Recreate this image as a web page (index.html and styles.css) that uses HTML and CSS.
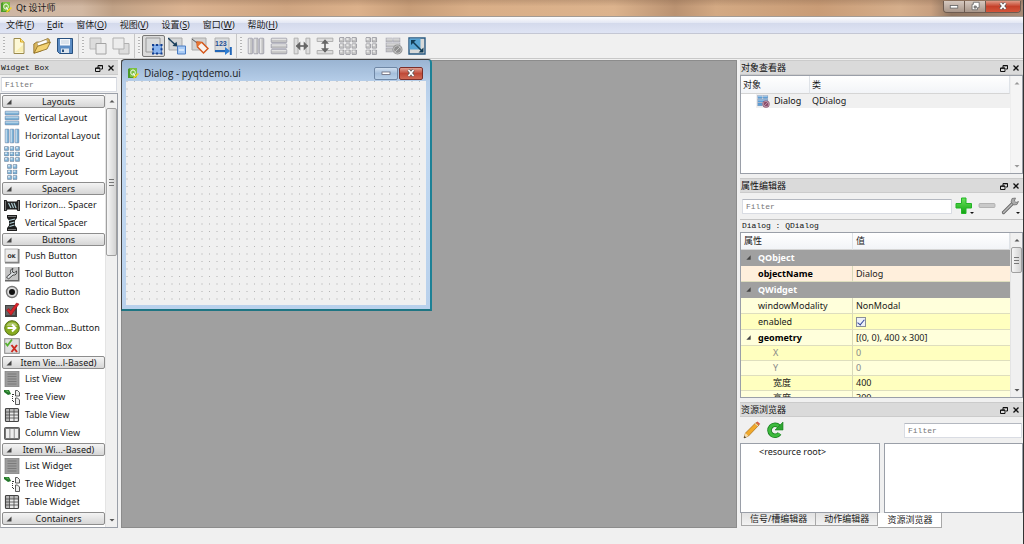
FILE: index.html
```html
<!DOCTYPE html>
<html lang="zh-CN">
<head>
<meta charset="utf-8">
<title>Qt 设计师</title>
<link rel="stylesheet" href="styles.css">
</head>
<body>
<svg class="defs" aria-hidden="true">
  <defs>
    <linearGradient id="g-grey" x1="0" y1="0" x2="1" y2="1"><stop offset="0" stop-color="#f4f4f4"/><stop offset="1" stop-color="#a4a4a4"/></linearGradient>
    <linearGradient id="g-green" x1="0" y1="0" x2="0" y2="1"><stop offset="0" stop-color="#6be35c"/><stop offset="1" stop-color="#12a312"/></linearGradient>
    <symbol id="i-qt" viewBox="0 0 12 12"><path d="M1 2l2-1h7v8l-1 2H1z" fill="#4c9a2a"/><path d="M3 1h7v8L9 10H3z" fill="#7cc142"/><path d="M6 3c-3 0-3 5 0 5s3-5 0-5M6 6l2 3" fill="none" stroke="#fff"/><path d="M11 6l1 1-4 4-2 .5.6-1.6z" fill="#f3d321"/></symbol>
    <symbol id="i-float" viewBox="0 0 8 8"><path d="M3 4V1.500h4.500V5H6M3 1.800h4.500M.5 4H5v3.500H.5zM.5 4.300H5" fill="none" stroke="#111"/></symbol>
    <symbol id="i-close" viewBox="0 0 8 8"><path d="M1.500 1.500l5 5M6.500 1.500l-5 5" stroke="#111" stroke-width="1.300"/></symbol>
    <symbol id="i-tri" viewBox="0 0 8 8"><path d="M6.500 1.500v5h-5z" fill="#444"/></symbol>
    <symbol id="i-up" viewBox="0 0 8 8"><path d="M1.500 5.500L4 3l2.500 2.500z" fill="#555"/></symbol>
    <symbol id="i-down" viewBox="0 0 8 8"><path d="M1.500 3L4 5.500 6.500 3z" fill="#555"/></symbol>

    <symbol id="i-rows" viewBox="0 0 16 16"><g fill="currentColor" stroke="#557" stroke-opacity=".5" stroke-width=".6"><rect x="1" y="1" width="14" height="4" rx=".8"/><rect x="1" y="6" width="14" height="4" rx=".8"/><rect x="1" y="11" width="14" height="4" rx=".8"/></g><path d="M1.500 1.500h13v1.200h-13zM1.500 6.500h13v1.200h-13zM1.500 11.500h13v1.200h-13z" fill="#fff" opacity=".5"/></symbol>
    <symbol id="i-cols" viewBox="0 0 16 16"><g fill="currentColor" stroke="#557" stroke-opacity=".5" stroke-width=".6"><rect x="1" y="1" width="4" height="14" rx=".8"/><rect x="6" y="1" width="4" height="14" rx=".8"/><rect x="11" y="1" width="4" height="14" rx=".8"/></g><path d="M1.500 1.500h1.300v13H1.500zM6.500 1.500h1.300v13H6.500zM11.500 1.500h1.300v13h-1.300z" fill="#fff" opacity=".6"/></symbol>
    <symbol id="i-cell" viewBox="0 0 5 5"><rect x=".4" y=".4" width="4.200" height="4.200" rx=".7" fill="currentColor" stroke="#445" stroke-opacity=".55" stroke-width=".6"/><rect x="1" y="1" width="2" height="1.600" fill="#fff" opacity=".65"/></symbol>
    <symbol id="i-grid" viewBox="0 0 16 16"><use href="#i-cell" x="0" y="0" width="5" height="5"/><use href="#i-cell" x="5.500" y="0" width="5" height="5"/><use href="#i-cell" x="11" y="0" width="5" height="5"/><use href="#i-cell" x="0" y="5.500" width="5" height="5"/><use href="#i-cell" x="5.500" y="5.500" width="5" height="5"/><use href="#i-cell" x="11" y="5.500" width="5" height="5"/><use href="#i-cell" x="0" y="11" width="5" height="5"/><use href="#i-cell" x="5.500" y="11" width="5" height="5"/><use href="#i-cell" x="11" y="11" width="5" height="5"/></symbol>
    <symbol id="i-form" viewBox="0 0 16 16"><use href="#i-cell" x="3" y="0" width="5" height="5"/><use href="#i-cell" x="8.500" y="0" width="5" height="5"/><use href="#i-cell" x="3" y="5.500" width="5" height="5"/><use href="#i-cell" x="8.500" y="5.500" width="5" height="5"/><use href="#i-cell" x="3" y="11" width="5" height="5"/><use href="#i-cell" x="8.500" y="11" width="5" height="5"/></symbol>
    <symbol id="i-break" viewBox="0 0 18 18"><g fill="currentColor" stroke="#557" stroke-opacity=".4" stroke-width=".6"><rect x="1" y="1" width="6.500" height="4"/><rect x="8.500" y="1" width="6.500" height="4"/><rect x="1" y="6" width="14" height="4"/><rect x="1" y="11" width="6.500" height="4"/></g><path d="M1.500 1.500h13v1h-13zM1.500 6.500h13v1h-13z" fill="#fff" opacity=".5"/><circle cx="12.500" cy="12.500" r="5" class="ban"/><path d="M9.700 15.300l5.600-5.600M12.500 8.700a3.800 3.800 0 1 1-.1 0" fill="none" stroke="#ddd" stroke-opacity=".7"/></symbol>
    <symbol id="i-hspacer" viewBox="0 0 16 16"><path d="M0 3h2.500l1 1.500h9l1-1.500H16v11h-2.500l-1-1.500h-9l-1 1.500H0z" fill="#222"/><path d="M1.500 4v9M14.500 4v9" stroke="#777"/><path d="M4.500 6l2.500 5M7.500 6l2 5M10 6l2 5" stroke="#a9c7ce" stroke-width="1.200"/></symbol>
    <symbol id="i-vspacer" viewBox="0 0 16 16"><path d="M3 0h10v3L11 5.500v5l2 2.500v3H3v-3l2-2.500v-5L3 3z" fill="#1d1d1d"/><path d="M4 1.500h8M4 14.500h8" stroke="#777"/><path d="M5 5.500l6-1.500M5.500 8.500l5-1.500M5.500 11.500l5-1.500" stroke="#b5d3da" stroke-width="1.200"/></symbol>
    <symbol id="i-ok" viewBox="0 0 16 16"><rect x="1" y="1" width="14.500" height="14.500" fill="#777"/><rect x="1" y="1" width="13" height="13" fill="#ececec" stroke="#999" stroke-width=".7"/><text x="7.500" y="9.500" text-anchor="middle" class="ok-text">OK</text></symbol>
    <symbol id="i-tool" viewBox="0 0 16 16"><rect x="1" y="1" width="14.500" height="14.500" fill="#666"/><rect x="1" y="1" width="13" height="13" fill="#c4c4c4"/><path d="M9 2.500c-3 .5-3 3.500-1.800 4.600L2.500 11l2 2 4.500-4c2.500.6 4.300-1.500 3.500-4l-2 1.800-1.700-.5-.6-1.600z" fill="#dfe3e6" stroke="#333" stroke-width=".9"/></symbol>
    <symbol id="i-radio" viewBox="0 0 16 16"><circle cx="8" cy="8" r="5.500" fill="#ddd" stroke="#777" stroke-width="1.400"/><circle cx="8" cy="8" r="3" fill="#111"/></symbol>
    <symbol id="i-check" viewBox="0 0 16 16"><path d="M1 3h12v12H1z" fill="#444"/><path d="M2 4h9v9H2z" fill="#666"/><path d="M2.500 8l2.500-1.500 1.500 2.500L12.500 1l2.500 1-8 11.500z" fill="#d8232a" stroke="#8c1115" stroke-width=".5"/></symbol>
    <symbol id="i-cmd" viewBox="0 0 16 16"><circle cx="8" cy="8" r="7.300" fill="#87ab20" stroke="#55701a"/><path d="M2.500 6a5.800 5 0 0 1 11 0z" fill="#fff" opacity=".35"/><path d="M3.500 8h8M8 4.500L11.500 8 8 11.500" fill="none" stroke="#fff" stroke-width="2"/></symbol>
    <symbol id="i-bbox" viewBox="0 0 16 16"><rect x=".7" y=".7" width="14.600" height="14.600" fill="#dfdfdf" stroke="#888"/><path d="M1.500 5l2 2.500L8 1.500" fill="none" stroke="#57b030" stroke-width="1.800"/><path d="M7.500 7l5.500 7M13 7l-5.500 7" stroke="#cc2a20" stroke-width="2"/></symbol>
    <symbol id="i-list" viewBox="0 0 16 16"><rect x="1" y="0" width="14" height="16" fill="#9c9c9c" stroke="#808080" stroke-width=".7"/><path d="M3.500 3h9M3.500 5.500h9M3.500 8h9M3.500 10.500h9M3.500 13h9" stroke="#777" stroke-width=".9"/></symbol>
    <symbol id="i-tree" viewBox="0 0 16 16"><path d="M0 1l5 0 2 4-3 1-4-3z" fill="#23762a"/><path d="M1 1.500l3 .3 1 2z" fill="#67c05d"/><path d="M8.500 5v7.500H11M9 5.500h2" fill="none" stroke="#333" stroke-dasharray="1 1"/><path d="M11.500 1.500h2L15.500 3.500V7h-4zM11.500 9h2l2 2v4.500h-4z" fill="#eee" stroke="#333" stroke-width=".8"/></symbol>
    <symbol id="i-table" viewBox="0 0 16 16"><rect x="1.500" y="1.500" width="13" height="13" rx="1" fill="#e9e9e9" stroke="#444" stroke-width="1.200"/><path d="M2 2h12v3H2zM2 2h3v12H2z" fill="#999" opacity=".6"/><path d="M2 5h12M2 8h12M2 11h12M5.500 2v12M10 2v12" stroke="#444" stroke-width=".8"/></symbol>
    <symbol id="i-column" viewBox="0 0 16 16"><rect x=".5" y="2.500" width="15" height="12" rx="1" fill="#777" stroke="#444" stroke-width=".8"/><path d="M2 4h3.500v9H2zM6.300 4h3.500v9H6.300zM10.600 4h3.500v9h-3.500z" fill="#eee"/></symbol>
    <symbol id="i-container" viewBox="0 0 16 16"><path d="M3 1h10v14H3z" fill="#333"/></symbol>

    <symbol id="i-new" viewBox="0 0 18 18"><path d="M4 1.500h6.500L14 5v11.500H4z" fill="#fdf8d6" stroke="#9b8a4c"/><path d="M10.500 1.500V5H14" fill="#f7e38b" stroke="#d9a820"/><path d="M5 15h8V8z" fill="#f7e9a0" opacity=".7"/></symbol>
    <symbol id="i-open" viewBox="0 0 18 18"><path d="M.8 16V7l3-2h3l8-3.500 1.500 1V7L8 14z" fill="#d9b65c" stroke="#8a6a20" stroke-width=".8"/><path d="M4 6l9.500-3.500 1 3L5 9z" fill="#fff" stroke="#9b8a5c" stroke-width=".5"/><path d="M1 16.300l3.500-7L17.500 5 14 12z" fill="#f3d272" stroke="#8a6a20" stroke-width=".8"/></symbol>
    <symbol id="i-save" viewBox="0 0 18 18"><path d="M1.500 1.500h15v15h-13l-2-2z" fill="#5b8cc4" stroke="#28507f"/><path d="M4 2h10v6.500H4z" fill="#f4f7fb"/><path d="M5 4h8M5 6h8" stroke="#b9c6d5" stroke-width=".8"/><path d="M5 11.500h8V16H5z" fill="#dbe4ee"/><path d="M6 12.500h2V15H6z" fill="#28507f"/></symbol>
    <symbol id="i-back" viewBox="0 0 18 18"><path d="M1 1h11v11H1z" fill="#dcdcdc" stroke="#b8b8b8"/><path d="M7 6.500h10V17H7z" fill="#ececec" stroke="#a4a4a4"/></symbol>
    <symbol id="i-front" viewBox="0 0 18 18"><path d="M7 6.500h10V17H7z" fill="#dcdcdc" stroke="#b0b0b0"/><path d="M1 1h11v11H1z" fill="#ececec" stroke="#b0b0b0"/></symbol>
    <symbol id="i-edit" viewBox="0 0 18 18"><path d="M1 1h14v14H1z" fill="#d9dbdc" stroke="#999"/><path d="M8 8h8.500v8.500H8z" fill="#89b4ef" stroke="#2458ae" stroke-width=".6"/><path d="M7 7h2v2H7zM11 7h2v2h-2zM15.500 7h2v2h-2zM7 11.300h2v2H7zM15.500 11.300h2v2h-2zM7 15.500h2v2H7zM11 15.500h2v2h-2zM15.500 15.500h2v2h-2z" fill="#123f91"/></symbol>
    <symbol id="i-signal" viewBox="0 0 18 18"><path d="M1 1h13v12H1z" fill="#d4d6d7" stroke="#aaa"/><path d="M0 1l7 6.500" stroke="#1a3f5c" stroke-width="1.500"/><path d="M9.500 9.500l-5-.5 4-4.200z" fill="#1a3f5c"/><path d="M9.500 9h8v8h-8z" fill="#a9cbf5" stroke="#4a7cc3"/><path d="M11 13h5" stroke="#fff"/></symbol>
    <symbol id="i-buddy" viewBox="0 0 18 18"><path d="M1 1h14v12H1z" fill="#d2d3d3" stroke="#aaa"/><path d="M1 2l5 4" stroke="#555"/><path d="M6 5l5 .5 6 6-4.500 4.500-6-6z" fill="#f8f4f0" stroke="#d4571c" stroke-width="1.500"/><path d="M6 5l5 .5-4.500 4.500z" fill="#e77733"/></symbol>
    <symbol id="i-tab" viewBox="0 0 18 18"><path d="M1 1h14v14H1z" fill="#d9dbdc" stroke="#b2b2b2"/><text x="1" y="9" class="tab-text">123</text><path d="M1 14h12M16.800 10v8" stroke="#2367b8" stroke-width="2"/><path d="M11 10l5 4-5 4z" fill="#2f7dd1"/></symbol>
    <symbol id="i-hsplit" viewBox="0 0 16 16"><path d="M1 1h3.500v14H1zM11.500 1H15v14h-3.500z" fill="#ddd" stroke="#aaa" stroke-width=".8"/><path d="M3 8h10" stroke="#666" stroke-width="1.500"/><path d="M2.500 8l4-4v8zM13.500 8l-4-4v8z" fill="#666"/></symbol>
    <symbol id="i-vsplit" viewBox="0 0 16 16"><path d="M1 1h14v3H1zM1 12h14v3H1z" fill="#ddd" stroke="#aaa" stroke-width=".8"/><path d="M8 3v10" stroke="#666" stroke-width="1.500"/><path d="M8 2l3.500 4h-7zM8 14l3.500-4h-7z" fill="#666"/></symbol>
    <symbol id="i-adjust" viewBox="0 0 18 18"><path d="M1 1h16v16H1z" fill="#d8dad9" stroke="#285981" stroke-width="1.400"/><path d="M1.500 1.500h11v11h-11z" fill="#58a4d3"/><path d="M4 4l10 10" stroke="#123c55" stroke-width="1.500"/><path d="M3 3h5L3 8zM15.500 15.500h-5l5-5z" fill="#123c55"/></symbol>
    <symbol id="i-plus" viewBox="0 0 18 18"><path d="M6.500 1h4.500v5.500h5.500V11H11v5.500H6.500V11H1V6.500h5.500z" fill="url(#g-green)" stroke="#22b526"/></symbol>
    <symbol id="i-minus" viewBox="0 0 18 18"><rect x="1" y="6.500" width="16" height="4" rx="1" fill="#c9c9c9" stroke="#a8a8a8" stroke-width=".8"/></symbol>
    <symbol id="i-wrench" viewBox="0 0 18 18"><path d="M2.500 15.500L12 6" stroke="#666" stroke-width="3.200" stroke-linecap="round"/><path d="M2.500 15.500L12 6" stroke="#bbb" stroke-width="1.500" stroke-linecap="round"/><path d="M14.500 1l-3.500.5-1 3.500 2.500 3 3.500-.5 1.500-3-2.500 1-1.600-1.500z" fill="#aaa" stroke="#666" stroke-width=".7"/></symbol>
    <symbol id="i-pencil" viewBox="0 0 18 18"><path d="M1 17l1.500-5L13 1.500 16 4 5.500 15z" fill="#f1a92b" stroke="#a66a12" stroke-width=".7"/><path d="M13 1.500L14.500.6 17.300 3 16 4z" fill="#d75a48"/><path d="M12 2.500L15 5" stroke="#ddd"/><path d="M1 17l1.500-5 3 3z" fill="#f4dcae"/><path d="M1 17l.5-2 1.500 1.400z" fill="#222"/></symbol>
    <symbol id="i-reload" viewBox="0 0 18 18"><path d="M13 5.500A5.500 5.500 0 1 0 13.500 12.500" fill="none" stroke="#187d20" stroke-width="4.600"/><path d="M13 5.500A5.500 5.500 0 1 0 13.500 12.500" fill="none" stroke="#3dba3d" stroke-width="3"/><path d="M17 1v8H9z" fill="#2fa532" stroke="#187d20" stroke-width=".6"/></symbol>
  </defs>
</svg>

<header class="titlebar">
  <svg class="icon-12"><use href="#i-qt"/></svg>
  <h1 class="titlebar-text">Qt 设计师</h1>
  <div class="window-controls">
    <button class="wc" aria-label="最小化"><svg viewBox="0 0 12 12"><rect x="1.500" y="5.500" width="9" height="3" fill="#fff" stroke="#666"/></svg></button>
    <button class="wc" aria-label="还原"><svg viewBox="0 0 12 12"><path d="M4 1.500h7V8H9v2.500H2.500V4H4z" fill="#fff" stroke="#666"/><path d="M5 6h2.500v2.500H5z" fill="#999" stroke="#666"/></svg></button>
    <button class="wc wc-close" aria-label="关闭"><svg viewBox="0 0 12 12"><path d="M3 2.500l6 7M9 2.500l-6 7" stroke="#555" stroke-width="4"/><path d="M3 2.500l6 7M9 2.500l-6 7" stroke="#fff" stroke-width="2.200"/></svg></button>
  </div>
</header>

<nav class="menubar">
  <button>文件(<u>F</u>)</button><button><u>E</u>dit</button><button>窗体(<u>O</u>)</button><button>视图(<u>V</u>)</button><button>设置(<u>S</u>)</button><button>窗口(<u>W</u>)</button><button>帮助(<u>H</u>)</button>
</nav>

<div class="toolbar" role="toolbar">
  <div class="tool-group">
    <button aria-label="新建"><svg><use href="#i-new"/></svg></button>
    <button aria-label="打开"><svg><use href="#i-open"/></svg></button>
    <button aria-label="保存"><svg><use href="#i-save"/></svg></button>
  </div>
  <div class="tool-group">
    <button aria-label="置后"><svg><use href="#i-back"/></svg></button>
    <button aria-label="置前"><svg><use href="#i-front"/></svg></button>
  </div>
  <div class="tool-group">
    <button class="pressed" aria-label="编辑窗口部件"><svg><use href="#i-edit"/></svg></button>
    <button aria-label="编辑信号/槽"><svg><use href="#i-signal"/></svg></button>
    <button aria-label="编辑伙伴"><svg><use href="#i-buddy"/></svg></button>
    <button aria-label="编辑顺序"><svg><use href="#i-tab"/></svg></button>
  </div>
  <div class="tool-group grey">
    <button aria-label="水平布局"><svg><use href="#i-cols"/></svg></button>
    <button aria-label="垂直布局"><svg><use href="#i-rows"/></svg></button>
    <button aria-label="水平分裂器"><svg><use href="#i-hsplit"/></svg></button>
    <button aria-label="垂直分裂器"><svg><use href="#i-vsplit"/></svg></button>
    <button aria-label="栅格布局"><svg><use href="#i-grid"/></svg></button>
    <button aria-label="表单布局"><svg><use href="#i-form"/></svg></button>
    <button aria-label="打破布局"><svg><use href="#i-break"/></svg></button>
    <button aria-label="调整大小"><svg><use href="#i-adjust"/></svg></button>
  </div>
</div>

<main class="workspace">
  <aside class="dock dock-left">
    <div class="dock-title"><h2 class="mono">Widget Box</h2><button aria-label="浮动"><svg><use href="#i-float"/></svg></button><button aria-label="关闭"><svg><use href="#i-close"/></svg></button></div>
    <input class="filter filter-left" type="text" placeholder="Filter" aria-label="Filter">
    <div class="scroll-frame widget-frame">
      <div class="widget-list">
        <button class="category"><svg><use href="#i-tri"/></svg><span>Layouts</span></button>
        <ul class="layout-items">
          <li><svg><use href="#i-rows"/></svg>Vertical Layout</li>
          <li><svg><use href="#i-cols"/></svg>Horizontal Layout</li>
          <li><svg><use href="#i-grid"/></svg>Grid Layout</li>
          <li><svg><use href="#i-form"/></svg>Form Layout</li>
        </ul>
        <button class="category"><svg><use href="#i-tri"/></svg><span>Spacers</span></button>
        <ul>
          <li><svg><use href="#i-hspacer"/></svg>Horizon... Spacer</li>
          <li><svg><use href="#i-vspacer"/></svg>Vertical Spacer</li>
        </ul>
        <button class="category"><svg><use href="#i-tri"/></svg><span>Buttons</span></button>
        <ul>
          <li><svg><use href="#i-ok"/></svg>Push Button</li>
          <li><svg><use href="#i-tool"/></svg>Tool Button</li>
          <li><svg><use href="#i-radio"/></svg>Radio Button</li>
          <li><svg><use href="#i-check"/></svg>Check Box</li>
          <li><svg><use href="#i-cmd"/></svg>Comman...Button</li>
          <li><svg><use href="#i-bbox"/></svg>Button Box</li>
        </ul>
        <button class="category"><svg><use href="#i-tri"/></svg><span>Item Vie...l-Based)</span></button>
        <ul>
          <li><svg><use href="#i-list"/></svg>List View</li>
          <li><svg><use href="#i-tree"/></svg>Tree View</li>
          <li><svg><use href="#i-table"/></svg>Table View</li>
          <li><svg><use href="#i-column"/></svg>Column View</li>
        </ul>
        <button class="category"><svg><use href="#i-tri"/></svg><span>Item Wi...-Based)</span></button>
        <ul>
          <li><svg><use href="#i-list"/></svg>List Widget</li>
          <li><svg><use href="#i-tree"/></svg>Tree Widget</li>
          <li><svg><use href="#i-table"/></svg>Table Widget</li>
        </ul>
        <button class="category"><svg><use href="#i-tri"/></svg><span>Containers</span></button>
        <ul>
          <li><svg><use href="#i-container"/></svg></li>
        </ul>
      </div>
      <div class="scrollbar"><svg><use href="#i-up"/></svg><div class="track"><div class="thumb thumb-long"></div></div><svg><use href="#i-down"/></svg></div>
    </div>
  </aside>

  <section class="canvas">
    <div class="form-window">
      <div class="form-title">
        <svg class="icon-12"><use href="#i-qt"/></svg>
        <span>Dialog - pyqtdemo.ui</span>
        <button class="fw-min" aria-label="最小化"><svg viewBox="0 0 12 8"><rect x="2" y="3" width="8" height="2.500" fill="#fff" stroke="#667" stroke-width=".8"/></svg></button>
        <button class="fw-close" aria-label="关闭"><svg viewBox="0 0 12 8"><path d="M3.500 1l5 6M8.500 1l-5 6" stroke="#555" stroke-width="3.200"/><path d="M3.500 1l5 6M8.500 1l-5 6" stroke="#fff" stroke-width="1.800"/></svg></button>
      </div>
      <svg class="form-grid">
        <defs><pattern id="dots" x="8" y="0" width="15" height="15" patternUnits="userSpaceOnUse">
          <rect width="1" height="1" fill="#b4b4b4"/><rect x="7" width="2" height="1" fill="#d0d0d0"/><rect y="7" width="1" height="2" fill="#d0d0d0"/><rect x="7" y="7" width="2" height="2" fill="#dedede"/>
        </pattern></defs>
        <rect width="100%" height="100%" fill="url(#dots)"/>
      </svg>
    </div>
  </section>

  <aside class="dock-right">
    <section class="dock dock-object">
      <div class="dock-title"><h2>对象查看器</h2><button aria-label="浮动"><svg><use href="#i-float"/></svg></button><button aria-label="关闭"><svg><use href="#i-close"/></svg></button></div>
      <div class="scroll-frame">
        <div class="table-wrap">
          <table class="object-table">
            <thead><tr><th class="col-object">对象</th><th>类</th></tr></thead>
            <tbody><tr><td><span class="object-name"><svg><use href="#i-break"/></svg>Dialog</span></td><td class="object-class">QDialog</td></tr></tbody>
          </table>
        </div>
        <div class="scrollbar idle"><svg><use href="#i-up"/></svg><div class="track"></div><svg><use href="#i-down"/></svg></div>
      </div>
    </section>

    <section class="dock dock-property">
      <div class="dock-title"><h2>属性编辑器</h2><button aria-label="浮动"><svg><use href="#i-float"/></svg></button><button aria-label="关闭"><svg><use href="#i-close"/></svg></button></div>
      <div class="dock-tools property-tools">
        <input class="filter filter-grow" type="text" placeholder="Filter" aria-label="Filter">
        <button class="drop" aria-label="添加动态属性"><svg><use href="#i-plus"/></svg></button>
        <button aria-label="删除动态属性"><svg><use href="#i-minus"/></svg></button>
        <button class="drop" aria-label="配置属性编辑器"><svg><use href="#i-wrench"/></svg></button>
      </div>
      <p class="class-label mono">Dialog : QDialog</p>
      <div class="scroll-frame">
        <div class="table-wrap">
          <table class="property-table">
            <thead><tr><th class="col-property">属性</th><th>值</th></tr></thead>
            <tbody>
              <tr class="group"><th colspan="2"><svg><use href="#i-tri"/></svg>QObject</th></tr>
              <tr class="peach"><th class="bold">objectName</th><td>Dialog</td></tr>
              <tr class="group"><th colspan="2"><svg><use href="#i-tri"/></svg>QWidget</th></tr>
              <tr class="light"><th>windowModality</th><td>NonModal</td></tr>
              <tr class="deep"><th><label for="enabled">enabled</label></th><td><input id="enabled" class="tick" type="checkbox" checked></td></tr>
              <tr class="light"><th class="bold"><svg><use href="#i-tri"/></svg>geometry</th><td>[(0, 0), 400 x 300]</td></tr>
              <tr class="deep sub muted"><th>X</th><td>0</td></tr>
              <tr class="light sub muted"><th>Y</th><td>0</td></tr>
              <tr class="deep sub"><th>宽度</th><td>400</td></tr>
              <tr class="light sub"><th>高度</th><td>300</td></tr>
            </tbody>
          </table>
        </div>
        <div class="scrollbar"><svg><use href="#i-up"/></svg><div class="track"><div class="thumb thumb-short"></div></div><svg><use href="#i-down"/></svg></div>
      </div>
    </section>

    <section class="dock dock-resource">
      <div class="dock-title"><h2>资源浏览器</h2><button aria-label="浮动"><svg><use href="#i-float"/></svg></button><button aria-label="关闭"><svg><use href="#i-close"/></svg></button></div>
      <div class="dock-tools">
        <button aria-label="编辑资源"><svg><use href="#i-pencil"/></svg></button>
        <button aria-label="重新加载"><svg><use href="#i-reload"/></svg></button>
        <input class="filter filter-end" type="text" placeholder="Filter" aria-label="Filter">
      </div>
      <div class="resource-panes"><div class="pane">&lt;resource root&gt;</div><div class="pane"></div></div>
      <div class="tabs" role="tablist">
        <button role="tab">信号/槽编辑器</button><button role="tab">动作编辑器</button><button role="tab" aria-selected="true" class="active">资源浏览器</button>
      </div>
    </section>
  </aside>
</main>
<footer class="statusbar"></footer>
</body>
</html>
```
FILE: styles.css
```css
* { box-sizing: border-box; }

body {
  margin: 0;
  height: 100vh;
  display: flex;
  flex-direction: column;
  overflow: hidden;
  background: #f0f0f0;
  color: #1a1a1a;
  font: 9px/12px "Noto Sans", "Noto Sans CJK SC", sans-serif;
  border-right: 1px solid #333;
}

button, input { font: inherit; color: inherit; margin: 0; }
button { padding: 0; border: 0; background: none; }
h1, h2, p, ul { margin: 0; padding: 0; font: inherit; }
ul { list-style: none; }
svg { display: block; flex: none; }
.defs { position: absolute; width: 0; height: 0; }
.mono, .filter { font-family: "Liberation Mono", monospace; font-size: 8px; }
.icon-12 { width: 12px; height: 12px; }
.layout-items svg { color: #7fb2d6; }
.grey { color: #c4c4c4; }
.ban { fill: var(--ban, #8f8f8f); }
.ok-text { font: bold 5px "DejaVu Sans", sans-serif; fill: #222; }
.tab-text { font: bold 7px "Liberation Sans", sans-serif; fill: #1d4e94; }

/* Title bar */
.titlebar {
  flex: none;
  height: 17px;
  display: flex;
  align-items: flex-start;
  gap: 4px;
  padding-top: 1px;
  border-bottom: 1px solid #a39b94;
  background:
    linear-gradient(180deg, rgba(110, 80, 60, .25), transparent 40%),
    linear-gradient(90deg, #cdb6a4 0, #d2b8a2 8%, #c0a186 11%, #dbb391 18%, #cfa581 28%, #dcb18b 35%, #c79d78 40%, #d9ae87 46%, #dcb38d 60%, #ba9271 66%, #d3a983 70%, #c99c76 80%, #d5ae8b 88%, #c8a080 91%, #8f7561 93%, #a98b77 100%);
}
.titlebar-text { flex: 1; line-height: 13px; }
.window-controls {
  display: flex;
  height: 12px;
  margin-right: 2px;
  border: 1px solid #6d5b50;
  border-top: 0;
  border-radius: 0 0 4px 4px;
  overflow: hidden;
}
.wc { width: 21px; display: flex; justify-content: center; background: linear-gradient(#d6c9c0, #a8968a); border-right: 1px solid #6d5b50; }
.wc svg { width: 10px; height: 10px; }
.wc-close { width: 34px; border: 0; background: linear-gradient(#e09a86, #c5412a 50%, #d4553a); }

/* Menu bar */
.menubar {
  flex: none;
  height: 17px;
  display: flex;
  gap: 13px;
  padding: 0 6px;
  background: linear-gradient(#fdfdfe, #e4e8f4 35%, #d4daec 40%, #dfe4f4);
  border-bottom: 1px solid #c4c7d4;
}

/* Toolbar */
.toolbar { flex: none; height: 25px; display: flex; align-items: center; padding-left: 3px; border-bottom: 1px solid #c8c8c8; }
.tool-group { height: 24px; display: flex; align-items: center; padding-right: 2px; margin-right: 3px; border-right: 1px solid #c6c6c6; }
.tool-group:last-child { border: 0; }
.tool-group::before { content: ""; width: 2px; height: 18px; margin-right: 2px; background: repeating-linear-gradient(#b5b5b5 0 1px, #f4f4f4 1px 3px); }
.tool-group button { width: 23px; height: 22px; display: flex; align-items: center; justify-content: center; }
.tool-group svg { width: 18px; height: 18px; }
.tool-group .pressed { border: 1px solid #777; border-radius: 2px; background: #dadada; }

/* Docks */
.workspace { flex: 1; min-height: 0; display: flex; gap: 3px; padding-top: 1px; }
.dock { display: flex; flex-direction: column; min-height: 0; }
.dock-left { width: 118px; flex: none; }
.dock-right { width: 283px; flex: none; display: flex; flex-direction: column; gap: 4px; }
.dock-object { flex: 0 0 114px; }
.dock-property { flex: 1; }
.dock-resource { flex: 0 0 126px; }
.dock-title { flex: none; height: 15px; display: flex; align-items: center; gap: 4px; padding: 0 3px 0 1px; background: #dadada; border: 1px solid #cbcbcb; border-width: 1px 0; }
.dock-title h2 { flex: 1; color: #111; }
.dock-title svg { width: 8px; height: 8px; }
.filter { height: 15px; padding: 0 3px; background: #fff; border: 1px solid #d9dce3; border-top-color: #b4b8c0; border-radius: 1px; outline: 0; min-width: 0; }
.filter::placeholder { color: #777; opacity: 1; }
.filter-left { margin: 2px 1px 1px; }

.scroll-frame { flex: 1; min-height: 0; display: flex; background: #fff; border: 1px solid #9a9fa8; }
.scrollbar { width: 12px; flex: none; display: flex; flex-direction: column; align-items: center; background: #f0f0f0; border-left: 1px solid #e4e4e4; padding: 3px 0; }
.scrollbar svg { width: 8px; height: 8px; }
.track { flex: 1; align-self: stretch; padding-top: 3px; }
.thumb { border: 1px solid #a0a0a0; border-radius: 2px; background: linear-gradient(90deg, #f6f6f6, #d2d2d2); display: flex; align-items: center; justify-content: center; }
.thumb::after { content: ""; width: 5px; height: 7px; background: repeating-linear-gradient(#777 0 1px, transparent 1px 3px); }
.thumb-long { height: 148px; }
.thumb-short { height: 26px; }
.idle { opacity: .6; }

/* Widget box */
.widget-frame { border-left-color: #b4b4b4; }
.widget-list { flex: 1; min-width: 0; overflow: hidden; }
.category { width: 103px; height: 13px; margin: 1px; display: flex; align-items: center; padding: 0 0 0 2px; border: 1px solid #8d8d8d; border-radius: 2px; background: linear-gradient(#f4f4f4, #d6d6d6); }
.category svg { width: 8px; height: 8px; }
.category span { flex: 1; line-height: 11px; white-space: nowrap; }
.widget-list li { height: 18px; display: flex; align-items: center; gap: 5px; padding-left: 3px; white-space: nowrap; }
.widget-list li svg { width: 16px; height: 16px; }

/* Form editor */
.canvas { flex: 1; min-width: 0; position: relative; background: #a0a0a0; border: 1px solid #8c8c8c; }
.form-window {
  position: absolute;
  left: -1px;
  top: -2px;
  width: 311px;
  height: 252px;
  display: flex;
  flex-direction: column;
  padding: 0 4px 4px;
  border: 1px solid #444;
  border-right: 2px solid #1c8196;
  border-bottom: 2px solid #1f7583;
  border-radius: 4px 4px 0 0;
  background: linear-gradient(#9ab4d2, #b6cee9 22px, #c3daf2 60px, #b9d1ec);
}
.form-title { flex: none; height: 21px; display: flex; align-items: center; gap: 5px; padding: 5px 3px 0 1px; }
.form-title span { flex: 1; font-family: "Open Sans", sans-serif; font-size: 10px; }
.form-title button { width: 24px; height: 13px; display: flex; align-items: center; justify-content: center; border: 1px solid #6f87a5; border-radius: 2px; background: linear-gradient(#d0dff0, #a5bfdc 50%, #b9d0e8); }
.form-title button svg { width: 12px; height: 8px; }
.form-title .fw-min { margin-right: -4px; }
.form-title .fw-close { border-color: #7c2f2a; background: linear-gradient(#e0a093, #c04a38 50%, #cf6a55); }
.form-grid { flex: 1; width: 100%; min-height: 0; background: #f0f0f0; }

/* Tables */
.table-wrap { flex: 1; min-width: 0; overflow: hidden; }
table { width: 100%; border-spacing: 0; table-layout: fixed; }
th, td { padding: 0 3px; text-align: left; font-weight: normal; white-space: nowrap; overflow: hidden; line-height: 12px; }
thead th { height: 17px; background: linear-gradient(#fff, #f2f4f7); border-right: 1px solid #dfe3e8; border-bottom: 1px solid #d5d5d5; }
.object-table thead th { height: 18px; padding-left: 2px; }
.col-object { width: 69px; }
.object-table td { height: 14px; padding: 0 0 0 2px; }
.object-name { --ban: #8d4a6a; display: flex; align-items: center; gap: 4px; height: 14px; margin-left: 13px; padding-left: 1px; background: #f0f0f0; color: #111; }
.object-name svg { width: 13px; height: 13px; color: #5e9fd6; }
.object-class { background: #f0f0f0; }
.dock-tools { flex: none; height: 26px; display: flex; align-items: center; gap: 5px; padding: 0 3px; }
.property-tools { padding: 0 4px 0 2px; }
.dock-tools svg { width: 18px; height: 18px; }
.filter-grow { flex: 1; margin-right: -2px; }
.filter-end { width: 118px; margin-left: auto; margin-right: -2px; }
.drop { position: relative; }
.drop::after { content: ""; position: absolute; right: -1px; bottom: 1px; border: 2px solid transparent; border-top-color: #111; border-bottom: 0; }
.class-label { flex: none; height: 13px; padding: 0 2px; border-top: 1px solid #c4c4c4; line-height: 11px; color: #111; }

.col-property { width: 112px; }
.property-table tbody th { height: 16px; padding-left: 17px; position: relative; border-right: 1px solid #d8d8b8; border-bottom: 1px solid #dedebe; }
.property-table td { height: 16px; border-bottom: 1px solid #dedebe; }
.property-table tbody th svg { position: absolute; left: 4px; top: 4px; width: 7px; height: 7px; }
.property-table .group th { background: #a0a0a0; color: #fff; font-weight: bold; border-color: #a0a0a0; }
.property-table .bold { font-weight: bold; color: #000; }
.property-table .sub th { height: 15px; padding-left: 32px; }
.property-table .sub td { height: 15px; }
.peach { background: #ffefdc; }
.light { background: #ffffdb; }
.deep { background: #ffffbf; }
.muted { color: #888; }
.tick { appearance: none; display: block; width: 10px; height: 10px; border: 1px solid #8a8f99; background: #eef1f8; position: relative; }
.tick:checked::after { content: ""; position: absolute; left: 2px; top: 0; width: 3px; height: 6px; border: solid #31459a; border-width: 0 1px 1px 0; transform: rotate(40deg); }

/* Resource browser */
.resource-panes { flex: 1; min-height: 0; display: flex; gap: 4px; }
.pane { flex: 1; padding: 2px 18px; background: #fff; border: 1px solid #9a9fa8; }
.tabs { flex: none; height: 15px; display: flex; align-items: flex-start; padding-left: 1px; }
.tabs button { height: 13px; padding: 0 8px; line-height: 12px; border: 1px solid #a8a8a8; border-top: 0; background: linear-gradient(#e2e2e2, #f2f2f2); }
.tabs button + button { border-left: 0; }
.tabs .active { height: 15px; padding: 0 9px; line-height: 14px; background: #fff; }

.statusbar { flex: none; height: 16px; }
```
